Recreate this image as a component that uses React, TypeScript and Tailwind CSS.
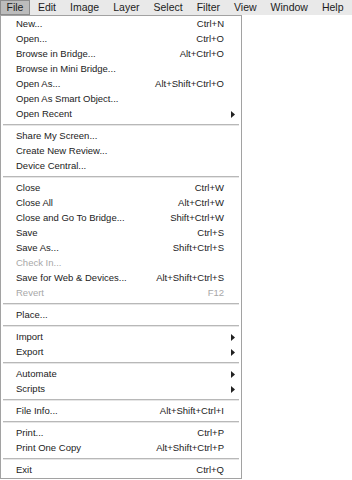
import React from "react";

type Item =
  | { sep: true }
  | { label: string; shortcut?: string; sub?: boolean; disabled?: boolean; sep?: false };

const menuBar = ["File", "Edit", "Image", "Layer", "Select", "Filter", "View", "Window", "Help"];

const items: Item[] = [
  { label: "New...", shortcut: "Ctrl+N" },
  { label: "Open...", shortcut: "Ctrl+O" },
  { label: "Browse in Bridge...", shortcut: "Alt+Ctrl+O" },
  { label: "Browse in Mini Bridge..." },
  { label: "Open As...", shortcut: "Alt+Shift+Ctrl+O" },
  { label: "Open As Smart Object..." },
  { label: "Open Recent", sub: true },
  { sep: true },
  { label: "Share My Screen..." },
  { label: "Create New Review..." },
  { label: "Device Central..." },
  { sep: true },
  { label: "Close", shortcut: "Ctrl+W" },
  { label: "Close All", shortcut: "Alt+Ctrl+W" },
  { label: "Close and Go To Bridge...", shortcut: "Shift+Ctrl+W" },
  { label: "Save", shortcut: "Ctrl+S" },
  { label: "Save As...", shortcut: "Shift+Ctrl+S" },
  { label: "Check In...", disabled: true },
  { label: "Save for Web & Devices...", shortcut: "Alt+Shift+Ctrl+S" },
  { label: "Revert", shortcut: "F12", disabled: true },
  { sep: true },
  { label: "Place..." },
  { sep: true },
  { label: "Import", sub: true },
  { label: "Export", sub: true },
  { sep: true },
  { label: "Automate", sub: true },
  { label: "Scripts", sub: true },
  { sep: true },
  { label: "File Info...", shortcut: "Alt+Shift+Ctrl+I" },
  { sep: true },
  { label: "Print...", shortcut: "Ctrl+P" },
  { label: "Print One Copy", shortcut: "Alt+Shift+Ctrl+P" },
  { sep: true },
  { label: "Exit", shortcut: "Ctrl+Q" },
];

function Arrow() {
  return (
    <svg width="4" height="7" viewBox="0 0 4 7">
      <path d="M0 0 L4 3.5 L0 7 Z" fill="#222" />
    </svg>
  );
}

export default function App() {
  return (
    <div
      className="w-[352px] h-[480px] bg-white overflow-hidden"
      style={{ fontFamily: '"Liberation Sans", Arial, sans-serif' }}
    >
      {/* Menu bar */}
      <div className="flex h-[15px] items-center bg-[#e9e9e9] text-[10.5px] text-[#1c1c1c] gap-[2px]">
        {menuBar.map((m, i) => (
          <div
            key={m}
            className={
              i === 0
                ? "h-[15px] flex items-center px-[5.5px] bg-[#bcbcbc] border border-[#8c8c8c]"
                : "h-[15px] flex items-center px-[6px]"
            }
          >
            {m}
          </div>
        ))}
      </div>

      {/* File menu */}
      <div className="w-[242px] border border-[#a2a2a2] bg-white pt-[1px] text-[9.5px] text-[#222]">
        {items.map((it, i) =>
          it.sep ? (
            <div key={i} className="mx-[2px] mt-[2px] mb-[3px] h-[2px] border-t border-[#b8b8b8] bg-[#e6e6e6]" />
          ) : (
            <div
              key={i}
              className={
                "flex h-[15px] items-center pl-[15px] " +
                (it.disabled ? "text-[#a8a8a8]" : "text-[#222]")
              }
            >
              <span className="flex-1 whitespace-nowrap">{it.label}</span>
              {it.shortcut && <span className="whitespace-nowrap">{it.shortcut}</span>}
              <span className="w-[17px] flex items-center pl-[7px]">{it.sub && <Arrow />}</span>
            </div>
          )
        )}
      </div>
    </div>
  );
}
